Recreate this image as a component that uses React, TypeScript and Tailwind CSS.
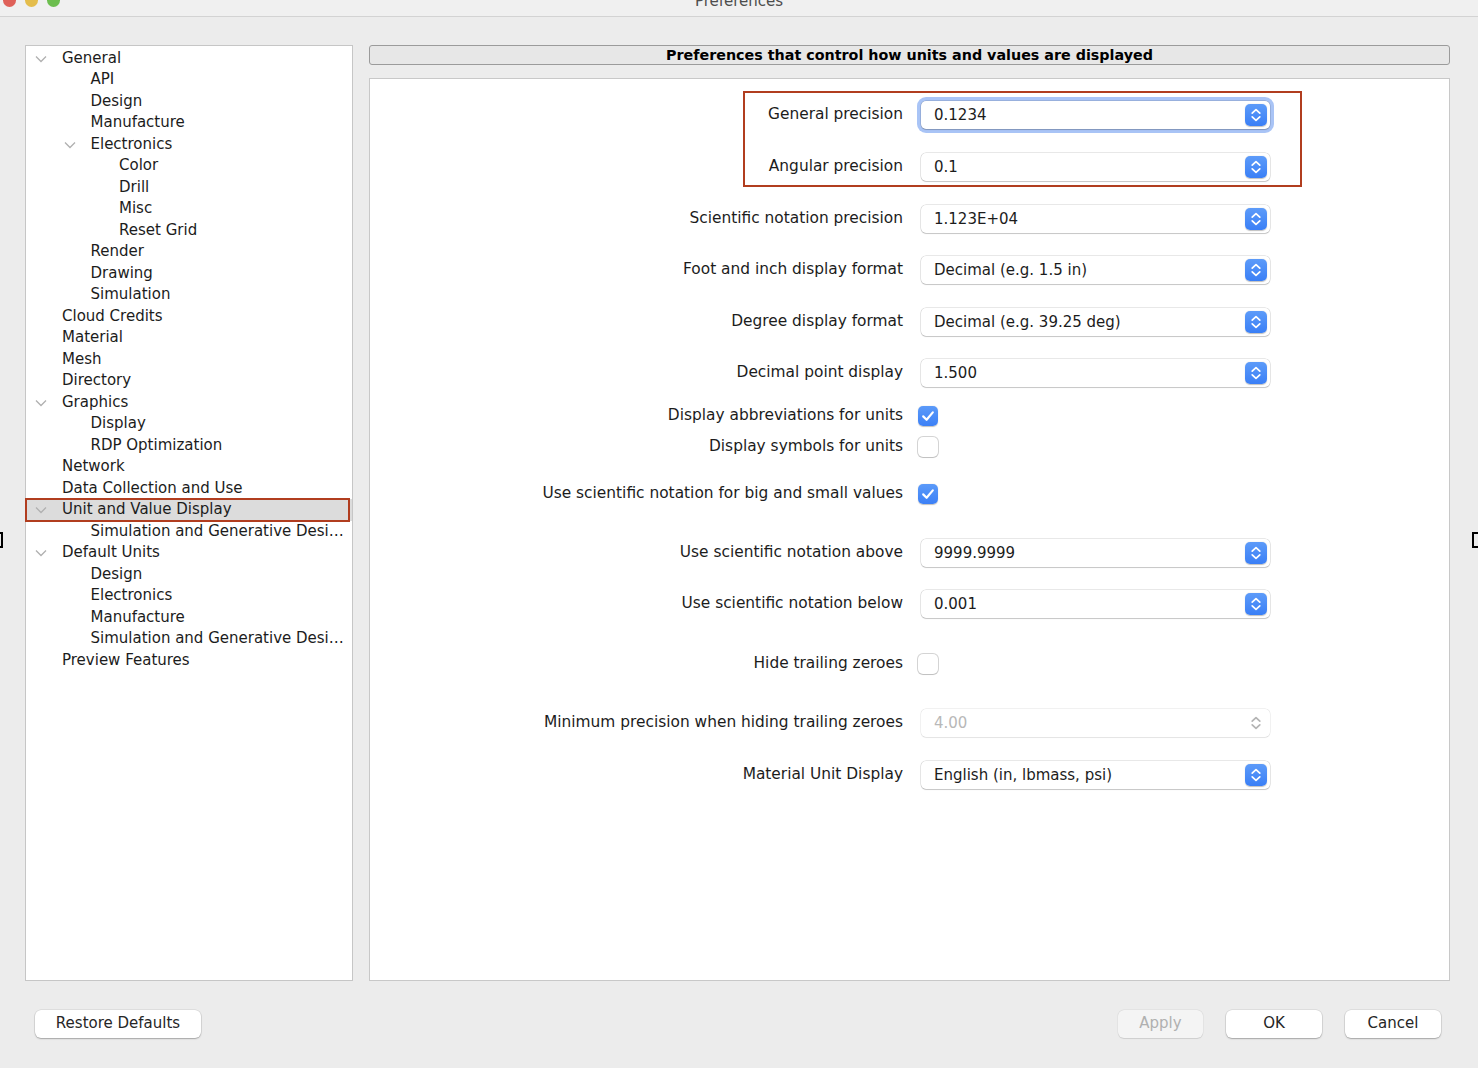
import React from 'react';

type TreeItem = { label: string; level: number; open?: boolean; selected?: boolean };

const TREE: TreeItem[] = [
  { label: 'General', level: 0, open: true },
  { label: 'API', level: 1 },
  { label: 'Design', level: 1 },
  { label: 'Manufacture', level: 1 },
  { label: 'Electronics', level: 1, open: true },
  { label: 'Color', level: 2 },
  { label: 'Drill', level: 2 },
  { label: 'Misc', level: 2 },
  { label: 'Reset Grid', level: 2 },
  { label: 'Render', level: 1 },
  { label: 'Drawing', level: 1 },
  { label: 'Simulation', level: 1 },
  { label: 'Cloud Credits', level: 0 },
  { label: 'Material', level: 0 },
  { label: 'Mesh', level: 0 },
  { label: 'Directory', level: 0 },
  { label: 'Graphics', level: 0, open: true },
  { label: 'Display', level: 1 },
  { label: 'RDP Optimization', level: 1 },
  { label: 'Network', level: 0 },
  { label: 'Data Collection and Use', level: 0 },
  { label: 'Unit and Value Display', level: 0, open: true, selected: true },
  { label: 'Simulation and Generative Design', level: 1 },
  { label: 'Default Units', level: 0, open: true },
  { label: 'Design', level: 1 },
  { label: 'Electronics', level: 1 },
  { label: 'Manufacture', level: 1 },
  { label: 'Simulation and Generative Design', level: 1 },
  { label: 'Preview Features', level: 0 },
];

// indent per level, in px (text left edge inside the panel)
const INDENT = [36, 64.5, 93];

function Chevron() {
  return (
    <svg width="12" height="8" viewBox="0 0 12 8" className="shrink-0">
      <path d="M1 1.5 L6 6.5 L11 1.5" fill="none" stroke="#b0b0b0" strokeWidth="1.3" />
    </svg>
  );
}

function TreeRow({ item }: { item: TreeItem }) {
  const left = INDENT[item.level];
  return (
    <div className={item.selected ? 'relative flex h-[21.5px] items-center bg-[#dcdcdc]' : 'relative flex h-[21.5px] items-center'}>
      {item.open && (
        <span className="absolute top-[7px]" style={{ left: left - 27 }}>
          <Chevron />
        </span>
      )}
      <span className="truncate pr-[8px] leading-[21.5px]" style={{ paddingLeft: left }}>
        {item.label}
      </span>
      {item.selected && (
        <span className="pointer-events-none absolute -top-[1px] -bottom-[1px] -left-[1px] right-[2px] border-2 border-[#b13d1f]" />
      )}
    </div>
  );
}

function Stepper({ disabled }: { disabled?: boolean }) {
  const stroke = disabled ? '#b4b4b4' : '#ffffff';
  return (
    <span
      className={
        disabled
          ? 'flex h-[22px] w-[22px] items-center justify-center rounded-[5px]'
          : 'flex h-[22px] w-[22px] items-center justify-center rounded-[5px] bg-gradient-to-b from-[#5d9bf9] to-[#3a7ff6] shadow-[0_0.5px_1px_rgba(0,0,0,0.25)]'
      }
    >
      <svg width="22" height="22" viewBox="0 0 22 22">
        <path d="M7.2 9.2 L11 5.6 L14.8 9.2" fill="none" stroke={stroke} strokeWidth="1.7" strokeLinecap="round" strokeLinejoin="round" />
        <path d="M7.2 12.8 L11 16.4 L14.8 12.8" fill="none" stroke={stroke} strokeWidth="1.7" strokeLinecap="round" strokeLinejoin="round" />
      </svg>
    </span>
  );
}

function Select({ value, focused, disabled }: { value: string; focused?: boolean; disabled?: boolean }) {
  return (
    <div
      className={
        'ml-[3px] flex h-[28px] w-[349px] items-center justify-between rounded-[5px] bg-white pl-[13px] pr-[3px] text-[15px] ' +
        (focused
          ? 'shadow-[0_0_0_0.5px_rgba(0,0,0,0.2),0_1px_1px_rgba(0,0,0,0.15),0_0_0_4px_#a9c4f6]'
          : disabled
            ? 'shadow-[0_0_0_0.5px_rgba(0,0,0,0.1),0_0.5px_1px_rgba(0,0,0,0.06)]'
            : 'shadow-[0_0_0_0.5px_rgba(0,0,0,0.18),0_1px_1px_rgba(0,0,0,0.15)]')
      }
    >
      <span className={disabled ? 'text-[#b8b8b8]' : ''}>{value}</span>
      <Stepper disabled={disabled} />
    </div>
  );
}

function Checkbox({ checked }: { checked?: boolean }) {
  if (checked) {
    return (
      <span className="flex h-[20px] w-[20px] items-center justify-center rounded-[5px] bg-gradient-to-b from-[#5b9af9] to-[#3c80f6] shadow-[0_0.5px_1px_rgba(0,0,0,0.25)]">
        <svg width="20" height="20" viewBox="0 0 20 20">
          <path d="M5.2 10.4 L8.6 13.8 L14.8 6.4" fill="none" stroke="#fff" strokeWidth="2.2" strokeLinecap="round" strokeLinejoin="round" />
        </svg>
      </span>
    );
  }
  return <span className="block h-[20px] w-[20px] rounded-[5px] bg-white shadow-[0_0_0_1px_rgba(0,0,0,0.16),0_0.5px_1px_rgba(0,0,0,0.1)]" />;
}

type Row =
  | { kind: 'select'; label: string; value: string; mt: string; focused?: boolean; disabled?: boolean }
  | { kind: 'check'; label: string; checked?: boolean; mt: string };

const ROWS: Row[] = [
  { kind: 'select', label: 'General precision', value: '0.1234', mt: 'mt-0', focused: true },
  { kind: 'select', label: 'Angular precision', value: '0.1', mt: 'mt-[24px]' },
  { kind: 'select', label: 'Scientific notation precision', value: '1.123E+04', mt: 'mt-[24px]' },
  { kind: 'select', label: 'Foot and inch display format', value: 'Decimal (e.g. 1.5 in)', mt: 'mt-[23px]' },
  { kind: 'select', label: 'Degree display format', value: 'Decimal (e.g. 39.25 deg)', mt: 'mt-[24px]' },
  { kind: 'select', label: 'Decimal point display', value: '1.500', mt: 'mt-[23px]' },
  { kind: 'check', label: 'Display abbreviations for units', checked: true, mt: 'mt-[19px]' },
  { kind: 'check', label: 'Display symbols for units', mt: 'mt-[11px]' },
  { kind: 'check', label: 'Use scientific notation for big and small values', checked: true, mt: 'mt-[27px]' },
  { kind: 'select', label: 'Use scientific notation above', value: '9999.9999', mt: 'mt-[35px]' },
  { kind: 'select', label: 'Use scientific notation below', value: '0.001', mt: 'mt-[23px]' },
  { kind: 'check', label: 'Hide trailing zeroes', mt: 'mt-[36px]' },
  { kind: 'select', label: 'Minimum precision when hiding trailing zeroes', value: '4.00', mt: 'mt-[35px]', disabled: true },
  { kind: 'select', label: 'Material Unit Display', value: 'English (in, lbmass, psi)', mt: 'mt-[24px]' },
];

function FormRow({ row }: { row: Row }) {
  return (
    <div className={'flex items-center gap-[15px] ' + row.mt + (row.kind === 'select' ? ' h-[28px]' : ' h-[20px]')}>
      <span className="w-[533px] shrink-0 text-right text-[15.4px]">{row.label}</span>
      {row.kind === 'select' ? (
        <Select value={row.value} focused={row.focused} disabled={row.disabled} />
      ) : (
        <Checkbox checked={row.checked} />
      )}
    </div>
  );
}

function Button({ children, width, disabled }: { children: React.ReactNode; width: string; disabled?: boolean }) {
  return (
    <button
      className={
        'flex h-[28px] items-center justify-center rounded-[6px] pb-[1px] ' +
        width +
        (disabled
          ? ' bg-[#f4f4f4] text-[#b0b0b0] shadow-[0_0_0_0.5px_rgba(0,0,0,0.06),0_0.5px_1px_rgba(0,0,0,0.1)]'
          : ' bg-white text-[#262626] shadow-[0_0_0_0.5px_rgba(0,0,0,0.12),0_1px_1.5px_rgba(0,0,0,0.25)]')
      }
    >
      {children}
    </button>
  );
}

export default function App() {
  return (
    <div className="relative h-[1068px] w-[1478px] overflow-hidden bg-[#ececec] font-['DejaVu_Sans',sans-serif] text-[15px] text-[#1c1c1c]">
      {/* title bar (cut off at the top) */}
      <div className="relative flex h-[17px] items-start justify-center border-b border-[#d3d3d3] bg-[#f0f0f0]">
        <div className="absolute left-[3px] top-[-6px] flex gap-[9px]">
          <span className="h-[13px] w-[13px] rounded-full bg-[#df6159]" />
          <span className="h-[13px] w-[13px] rounded-full bg-[#e4bd4c]" />
          <span className="h-[13px] w-[13px] rounded-full bg-[#6cbe4f]" />
        </div>
        <span className="-mt-[8px] leading-[18px] text-[#4d4d4d]">Preferences</span>
      </div>

      {/* resize marks */}
      <span className="absolute left-[-1px] top-[532px] h-[16px] w-[4px] border-2 border-l-0 border-black" />
      <span className="absolute right-[0px] top-[532px] h-[16px] w-[6px] border-2 border-r-0 border-black" />

      <div className="flex gap-[16px] pl-[25px] pt-[28px]">
        {/* tree */}
        <div className="h-[936px] w-[328px] border border-[#c6c6c6] bg-white pt-[1.5px]">
          {TREE.map((item, i) => (
            <TreeRow key={i} item={item} />
          ))}
        </div>

        {/* settings */}
        <div className="flex w-[1081px] flex-col">
          <div className="flex h-[20px] items-center justify-center rounded-[3px] border border-[#9b9b9b] bg-[#e7e7e7] pt-[1px] text-[14.3px] font-bold leading-none text-black">
            Preferences that control how units and values are displayed
          </div>
          <div className="relative mt-[13px] h-[903px] border border-[#c8c8c8] bg-white pt-[22px]">
            <span className="pointer-events-none absolute left-[373px] top-[12px] h-[96px] w-[559px] border-2 border-[#b13d1f]" />
            {ROWS.map((row, i) => (
              <FormRow key={i} row={row} />
            ))}
          </div>
        </div>
      </div>

      <div className="mt-[29px] flex items-center justify-between pl-[35px] pr-[37px]">
        <Button width="w-[166px]">Restore Defaults</Button>
        <div className="flex gap-[23px]">
          <Button width="w-[85px]" disabled>
            Apply
          </Button>
          <Button width="w-[96px]">OK</Button>
          <Button width="w-[96px]">Cancel</Button>
        </div>
      </div>
    </div>
  );
}
